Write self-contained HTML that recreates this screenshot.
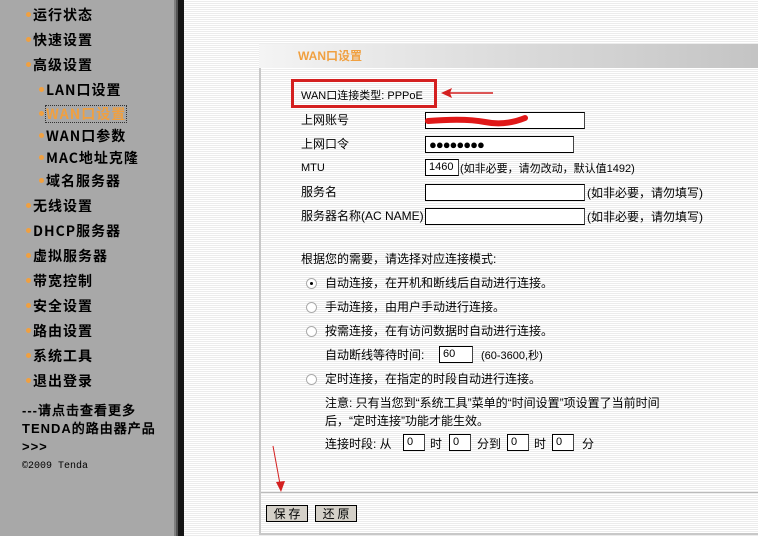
<!DOCTYPE html>
<html><head><meta charset="utf-8"><style>
*{margin:0;padding:0;box-sizing:border-box}
body{width:758px;height:536px;overflow:hidden;position:relative;font-family:"Liberation Sans","SimSun","Noto Sans CJK SC",sans-serif;font-size:12px;color:#000}
#side{position:absolute;left:0;top:0;width:174px;height:536px;background:#a8a8a8}
#strip{position:absolute;left:174px;top:0;width:10px;height:536px;background:linear-gradient(90deg,#808080 0,#808080 2px,#555 2px,#555 4px,#151515 4px)}
#main{position:absolute;left:184px;top:0;width:574px;height:536px;background:repeating-linear-gradient(180deg,#fff 0,#fff 1px,#ececec 1px,#ececec 2px)}
.m{position:absolute;font-weight:bold;font-size:14px;letter-spacing:1px;font-family:"WenQuanYi Zen Hei","Noto Sans CJK SC",sans-serif;line-height:16px;white-space:nowrap}
.m:before{content:"";position:absolute;left:-7px;top:5px;width:5px;height:5px;border-radius:50%;background:#f0a040}
.a{position:absolute;font-size:12px;line-height:14px;font-family:"Liberation Sans","Noto Sans CJK SC",sans-serif;white-space:nowrap}
.in{position:absolute;border:1px solid #000;border-right-color:#444;background:#fff;height:17px;font-size:11px;padding-left:3px;line-height:15px}
.r{position:absolute;width:11px;height:11px;border-radius:50%;border:1px solid #aaa;background:#fff}
.btn{position:absolute;top:505px;width:42px;height:17px;background:#d4d0c8;border:1px solid #000;font-size:12px;text-align:center;line-height:15px;white-space:nowrap;font-family:"Noto Sans CJK SC",sans-serif}
</style></head><body>
<div id="side">
<div class="m" style="left:33px;top:7px">运行状态</div>
<div class="m" style="left:33px;top:32px">快速设置</div>
<div class="m" style="left:33px;top:57px">高级设置</div>
<div class="m" style="left:46px;top:82px">LAN口设置</div>
<div class="m" style="left:46px;top:106px;color:#f0a040;outline:1px dotted #333">WAN口设置</div>
<div class="m" style="left:46px;top:128px">WAN口参数</div>
<div class="m" style="left:46px;top:150px">MAC地址克隆</div>
<div class="m" style="left:46px;top:173px">域名服务器</div>
<div class="m" style="left:33px;top:198px">无线设置</div>
<div class="m" style="left:33px;top:223px">DHCP服务器</div>
<div class="m" style="left:33px;top:248px">虚拟服务器</div>
<div class="m" style="left:33px;top:273px">带宽控制</div>
<div class="m" style="left:33px;top:298px">安全设置</div>
<div class="m" style="left:33px;top:323px">路由设置</div>
<div class="m" style="left:33px;top:348px">系统工具</div>
<div class="m" style="left:33px;top:373px">退出登录</div>
<div style="position:absolute;left:22px;top:402px;font-weight:bold;font-size:13px;line-height:18px;letter-spacing:1px;font-family:'WenQuanYi Zen Hei',sans-serif">---请点击查看更多<br>TENDA的路由器产品<br>&gt;&gt;&gt;</div>
<div style="position:absolute;left:22px;top:461px;font-size:10px;font-family:'Liberation Mono',monospace">©2009 Tenda</div>
</div>
<div id="strip"></div>
<div id="main"></div>
<div style="position:absolute;left:259px;top:44px;width:499px;height:24px;background:linear-gradient(90deg,#f4f4f4,#e0e0e0 40%,#c4c4c4)"></div>
<div style="position:absolute;left:298px;top:48px;color:#f0a040;font-weight:bold;font-size:12px;line-height:16px">WAN口设置</div>
<div style="position:absolute;left:259px;top:68px;width:2px;height:467px;background:#c8c8c8"></div>
<div style="position:absolute;left:259px;top:533px;width:499px;height:2px;background:#c8c8c8"></div>
<div style="position:absolute;left:261px;top:492px;width:497px;height:1px;background:#bbb"></div>
<div style="position:absolute;left:291px;top:79px;width:146px;height:29px;border:3px solid #d42020"></div>
<div class="a" style="left:301px;top:89px;font-size:11px">WAN口连接类型: PPPoE</div>
<svg style="position:absolute;left:440px;top:86px" width="55" height="14"><line x1="8" y1="7" x2="53" y2="7" stroke="#d42020" stroke-width="1.5"/><path d="M1 7 L12 2 L10 7 L12 12Z" fill="#d42020"/></svg>
<div class="a" style="left:301px;top:113px">上网账号</div>
<div class="in" style="left:425px;top:112px;width:160px"></div>
<svg style="position:absolute;left:425px;top:112px" width="110" height="18"><path d="M3 9 Q40 6 60 10 Q80 14 100 6" stroke="#e01818" stroke-width="6" fill="none" stroke-linecap="round"/></svg>
<div class="a" style="left:301px;top:137px">上网口令</div>
<div class="in" style="left:425px;top:136px;width:149px;font-size:13px;letter-spacing:-1px">●●●●●●●●</div>
<div class="a" style="left:301px;top:161px;font-size:11px">MTU</div>
<div class="in" style="left:425px;top:159px;width:34px">1460</div>
<div class="a" style="left:460px;top:162px;font-size:11px">(如非必要，请勿改动，默认值1492)</div>
<div class="a" style="left:301px;top:185px">服务名</div>
<div class="in" style="left:425px;top:184px;width:160px"></div>
<div class="a" style="left:587px;top:186px">(如非必要，请勿填写)</div>
<div class="a" style="left:301px;top:209px">服务器名称(AC NAME)</div>
<div class="in" style="left:425px;top:208px;width:160px"></div>
<div class="a" style="left:587px;top:210px">(如非必要，请勿填写)</div>
<div class="a" style="left:301px;top:252px">根据您的需要，请选择对应连接模式:</div>
<div class="r" style="left:306px;top:278px"><div style="position:absolute;left:3px;top:3px;width:3px;height:3px;background:#000;border-radius:50%"></div></div>
<div class="a" style="left:325px;top:276px">自动连接，在开机和断线后自动进行连接。</div>
<div class="r" style="left:306px;top:302px"></div>
<div class="a" style="left:325px;top:300px">手动连接，由用户手动进行连接。</div>
<div class="r" style="left:306px;top:326px"></div>
<div class="a" style="left:325px;top:324px">按需连接，在有访问数据时自动进行连接。</div>
<div class="a" style="left:325px;top:348px">自动断线等待时间:</div>
<div class="in" style="left:439px;top:346px;width:34px">60</div>
<div class="a" style="left:481px;top:349px;font-size:11px">(60-3600,秒)</div>
<div class="r" style="left:306px;top:374px"></div>
<div class="a" style="left:325px;top:372px">定时连接，在指定的时段自动进行连接。</div>
<div class="a" style="left:325px;top:394px;line-height:18px">注意: 只有当您到“系统工具”菜单的“时间设置”项设置了当前时间<br>后，“定时连接”功能才能生效。</div>
<div class="a" style="left:325px;top:437px">连接时段: 从</div>
<div class="in" style="left:403px;top:434px;width:22px">0</div>
<div class="a" style="left:430px;top:437px">时</div>
<div class="in" style="left:449px;top:434px;width:22px">0</div>
<div class="a" style="left:477px;top:437px">分到</div>
<div class="in" style="left:507px;top:434px;width:22px">0</div>
<div class="a" style="left:534px;top:437px">时</div>
<div class="in" style="left:552px;top:434px;width:22px">0</div>
<div class="a" style="left:582px;top:437px">分</div>
<svg style="position:absolute;left:268px;top:444px" width="20" height="50"><line x1="5" y1="2" x2="12" y2="40" stroke="#d42020" stroke-width="1"/><path d="M8 38 L17 37 L13 48Z" fill="#d42020"/></svg>
<div class="btn" style="left:266px">保 存</div>
<div class="btn" style="left:315px">还 原</div>
</body></html>
